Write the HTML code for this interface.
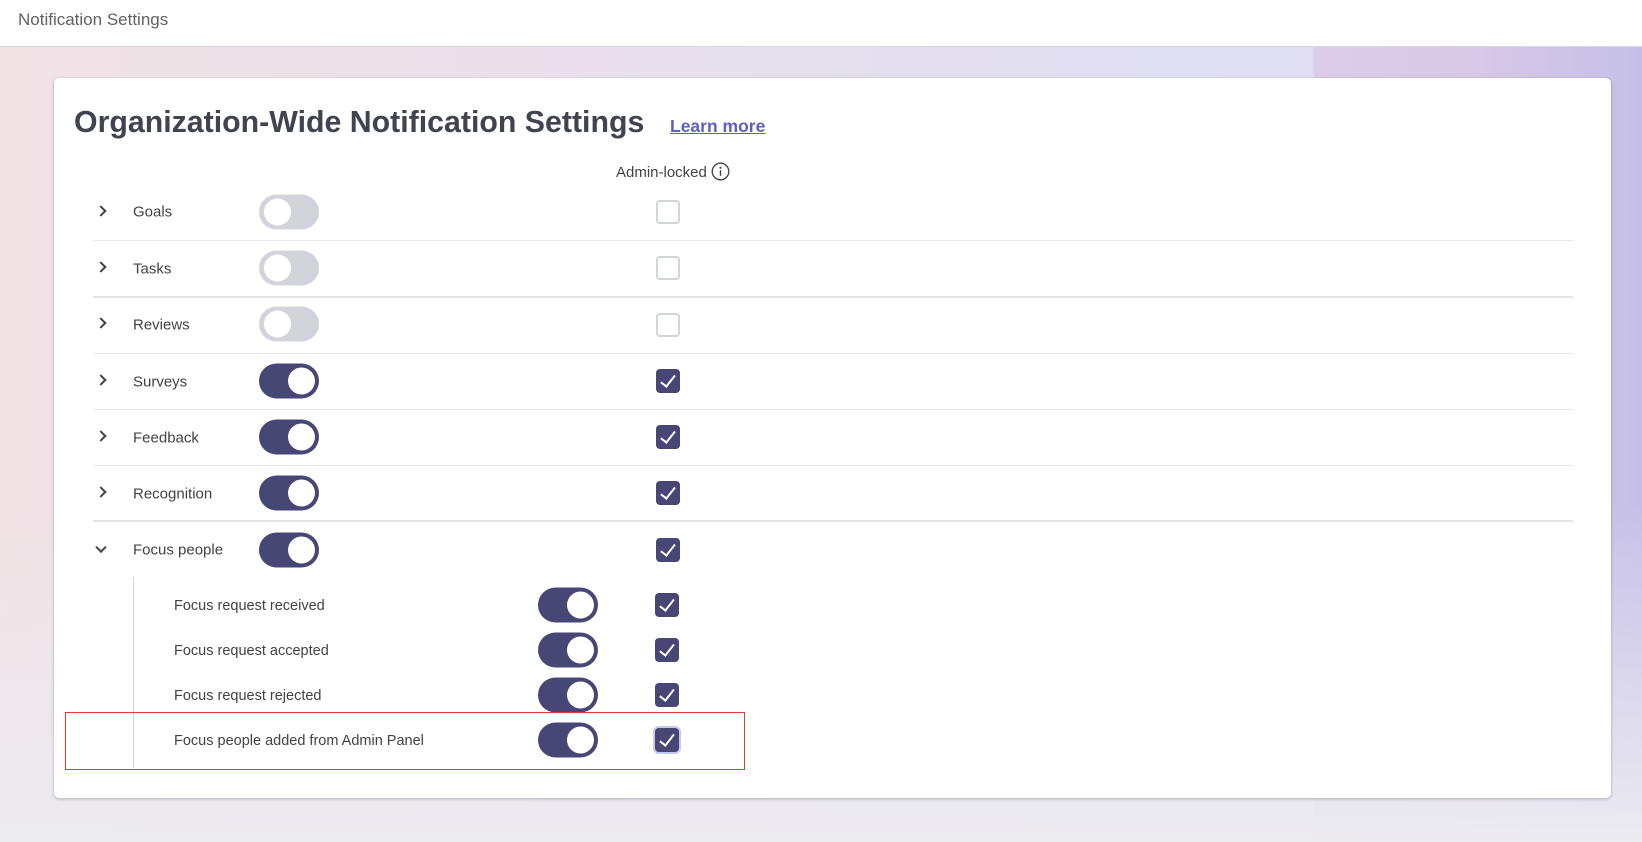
<!DOCTYPE html>
<html><head><meta charset="utf-8"><style>
*{box-sizing:border-box;margin:0;padding:0}
body{width:1642px;height:842px;overflow:hidden;font-family:"Liberation Sans",sans-serif;color:#424242;position:relative;
background:linear-gradient(180deg,rgba(236,233,240,0) 60%,#ecebf0 100%),linear-gradient(90deg,#f1e2e5 0%,#e8e0ec 40%,#dfdef3 75%,#dfdef3 80%,#dccde8 80%,#d6c8e6 90%,#c6c0e8 100%);}
.hdr{position:absolute;left:0;top:0;width:1642px;height:47px;background:#fff;border-bottom:1px solid #d6d6dc}
.hdr span{position:absolute;left:18px;top:10px;font-size:17px;color:#616161}
.card{position:absolute;left:54px;top:78px;width:1557px;height:720px;background:#fff;border-radius:5px;box-shadow:0 1px 3px rgba(0,0,0,.25)}
.abs{position:absolute}
h1{position:absolute;left:74px;top:106px;font-size:30.3px;font-weight:bold;color:#3f4450;white-space:nowrap}
.lm{position:absolute;left:670px;top:116px;font-size:17.5px;font-weight:bold;color:#5b5fc7;text-decoration:underline}
.al{position:absolute;left:616px;top:162px;font-size:15px;color:#424242}
.lbl{position:absolute;font-size:15px;color:#424242;transform:translateY(-50%)}
.tg{position:absolute;width:60px;height:35px;border-radius:18px;transform:translateY(-50%)}
.tg::after{content:"";position:absolute;top:4px;width:27px;height:27px;border-radius:50%;background:#fff}
.on{background:#464775}.on::after{right:4px}
.off{background:#d1d5db}.off::after{left:5px}
.cb{position:absolute;left:656px;width:24px;height:24px;border-radius:4px;transform:translateY(-50%)}
.cb.u{border:2px solid #d1d5db;background:#fff}
.cb.c{background:#464775}
.cb.c::after{content:"";position:absolute;left:8px;top:3px;width:6px;height:13px;border:solid #fff;border-width:0 2px 2px 0;transform:rotate(38deg)}
.sep{position:absolute;left:93px;width:1480px;height:1px;background:#e6e6e6}
.sep.t{height:2px;background:#e4e4e4}
.chev{position:absolute;left:97px;width:8px;height:8px;border:solid #424242;border-width:0 2px 2px 0;transform:translateY(-50%) rotate(-45deg)}
.chev.d{transform:translateY(-70%) rotate(45deg)}
</style></head><body>
<div class="hdr"><span>Notification Settings</span></div>
<div class="card"></div>
<h1>Organization-Wide Notification Settings</h1>
<span class="lm">Learn more</span>
<span class="al">Admin-locked <svg width="19" height="19" viewBox="0 0 19 19" style="vertical-align:-4px"><circle cx="9.5" cy="9.5" r="8.3" fill="none" stroke="#424242" stroke-width="1.3"/><circle cx="9.5" cy="5.7" r="1" fill="#424242"/><path d="M9.5 8.3v5.5" stroke="#424242" stroke-width="1.4"/></svg></span>

<div class="chev" style="top:211px"></div><div class="lbl" style="left:133px;top:212px">Goals</div><div class="tg off" style="left:259px;top:212px"></div><div class="cb u" style="top:212px"></div>
<div class="sep" style="top:240px"></div>
<div class="chev" style="top:267px"></div><div class="lbl" style="left:133px;top:269px">Tasks</div><div class="tg off" style="left:259px;top:268px"></div><div class="cb u" style="top:268px"></div>
<div class="sep t" style="top:296px"></div>
<div class="chev" style="top:323px"></div><div class="lbl" style="left:133px;top:325px">Reviews</div><div class="tg off" style="left:259px;top:324px"></div><div class="cb u" style="top:325px"></div>
<div class="sep" style="top:353px"></div>
<div class="chev" style="top:380px"></div><div class="lbl" style="left:133px;top:382px">Surveys</div><div class="tg on" style="left:259px;top:381px"></div><div class="cb c" style="top:381px"></div>
<div class="sep" style="top:409px"></div>
<div class="chev" style="top:436px"></div><div class="lbl" style="left:133px;top:438px">Feedback</div><div class="tg on" style="left:259px;top:437px"></div><div class="cb c" style="top:437px"></div>
<div class="sep" style="top:465px"></div>
<div class="chev" style="top:492px"></div><div class="lbl" style="left:133px;top:494px">Recognition</div><div class="tg on" style="left:259px;top:493px"></div><div class="cb c" style="top:493px"></div>
<div class="sep t" style="top:520px"></div>
<div class="chev d" style="top:549px"></div><div class="lbl" style="left:133px;top:550px">Focus people</div><div class="tg on" style="left:259px;top:550px"></div><div class="cb c" style="top:550px"></div>

<div class="abs" style="left:133px;top:577px;width:1px;height:191px;background:#d6d6d6"></div>
<div class="lbl" style="left:174px;top:606px;font-size:14.5px">Focus request received</div><div class="tg on" style="left:538px;top:605px"></div><div class="cb c" style="top:605px;left:655px"></div>
<div class="lbl" style="left:174px;top:651px;font-size:14.5px">Focus request accepted</div><div class="tg on" style="left:538px;top:650px"></div><div class="cb c" style="top:650px;left:655px"></div>
<div class="lbl" style="left:174px;top:696px;font-size:14.5px">Focus request rejected</div><div class="tg on" style="left:538px;top:695px"></div><div class="cb c" style="top:695px;left:655px"></div>
<div class="lbl" style="left:174px;top:741px;font-size:14.5px">Focus people added from Admin Panel</div><div class="tg on" style="left:538px;top:740px"></div><div class="cb c" style="top:740px;left:655px;box-shadow:0 0 0 2px #c7c8f0"></div>
<div class="abs" style="left:65px;top:712px;width:680px;height:58px;border:1px solid #e53935"></div>
</body></html>
